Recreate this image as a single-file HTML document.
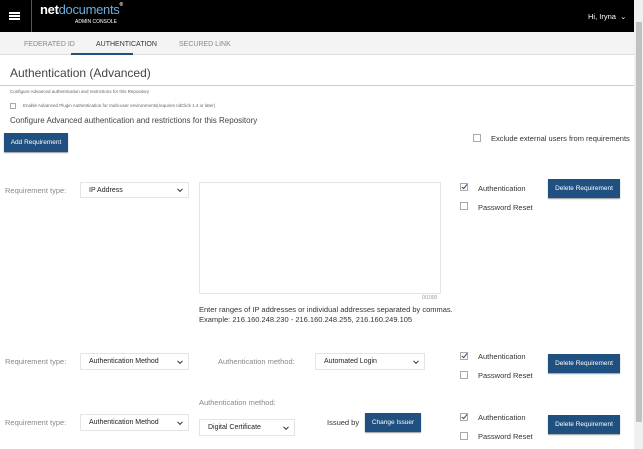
<!DOCTYPE html>
<html><head><style>
*{box-sizing:border-box;margin:0;padding:0}
body{width:643px;height:449px;overflow:hidden;background:#fff;font-family:"Liberation Sans",sans-serif;position:relative;color:#333}
.a{position:absolute;white-space:nowrap}
.sel{position:absolute;border:1px solid #e4e4e4;background:#fff;font-size:7px;color:#222;padding-left:8px;display:flex;align-items:center}
.sel:after{content:"";position:absolute;right:6px;top:50%;width:3px;height:3px;border-right:1.3px solid #333;border-bottom:1.3px solid #333;transform:translateY(-70%) rotate(45deg)}
.btn{position:absolute;background:#1f5080;color:#fff;font-size:6.5px;display:flex;align-items:center;justify-content:center;box-shadow:0 1px 1px #999}
.cb{position:absolute;width:8px;height:8px;border:1px solid #aaa;background:#fff}
.ck:after{content:"";position:absolute;left:2px;top:-1px;width:2px;height:5px;border-right:1.3px solid #2a4a70;border-bottom:1.3px solid #2a4a70;transform:rotate(40deg)}
.lbl{font-size:7.5px;color:#888}
.t8{font-size:7.5px;color:#333}
</style></head><body>
<div class="a" style="left:0;top:0;width:634px;height:32px;background:#000"></div>
<div class="a" style="left:9px;top:12px;width:11px;height:2px;background:#fff;box-shadow:0 3px 0 #fff,0 6px 0 #fff"></div>
<div class="a" style="left:31px;top:0;width:1px;height:32px;background:#555"></div>
<div class="a" style="left:40px;top:2px;font-size:13px;font-weight:bold;color:#fff;letter-spacing:-0.3px">net<span style="color:#6aaee0;font-weight:normal">documents</span><span style="font-size:5px;vertical-align:top">®</span></div>
<div class="a" style="left:75px;top:19px;font-size:5px;color:#fff">ADMIN CONSOLE</div>
<div class="a" style="left:588px;top:12px;font-size:7.5px;color:#fff">Hi, Iryna &nbsp;⌄</div>
<div class="a" style="left:634px;top:0;width:9px;height:449px;background:#f0f0f0"></div>
<div class="a" style="left:636px;top:22px;width:6px;height:400px;background:#c1c1c1"></div>
<div class="a" style="left:0;top:32px;width:634px;height:23px;background:#f4f4f4;border-bottom:1px solid #ddd"></div>
<div class="a" style="left:24px;top:41px;font-size:7px;color:#888">FEDERATED ID</div>
<div class="a" style="left:96px;top:41px;font-size:7px;color:#333">AUTHENTICATION</div>
<div class="a" style="left:179px;top:41px;font-size:7px;color:#888">SECURED LINK</div>
<div class="a" style="left:71px;top:53px;width:62px;height:2px;background:#1f5080"></div>
<div class="a" style="left:10px;top:66px;font-size:12px;color:#444">Authentication (Advanced)</div>
<div class="a" style="left:0;top:85px;width:634px;height:1px;background:#ccc"></div>
<div class="a" style="left:10px;top:89px;font-size:4.5px;color:#666">Configure Advanced authentication and restrictions for this Repository</div>
<div class="cb" style="left:10px;top:103px;width:6px;height:6px"></div>
<div class="a" style="left:23px;top:103px;font-size:4.5px;color:#666">Enable Advanced Plugin Authentication for multi-user environments(requires ndClick 1.4 or later)</div>
<div class="a" style="left:10px;top:116px;font-size:8px;color:#444">Configure Advanced authentication and restrictions for this Repository</div>
<div class="btn" style="left:4px;top:133px;width:64px;height:19px">Add Requirement</div>
<div class="cb" style="left:473px;top:134px"></div>
<div class="a t8" style="left:491px;top:134px">Exclude external users from requirements</div>

<div class="a lbl" style="left:5px;top:186px">Requirement type:</div>
<div class="sel" style="left:80px;top:182px;width:109px;height:16px">IP Address</div>
<div class="a" style="left:199px;top:182px;width:242px;height:112px;border:1px solid #e4e4e4"></div>
<div class="a" style="left:422px;top:295px;font-size:5px;color:#999">0/1000</div>
<div class="a t8" style="left:199px;top:305px;line-height:10px">Enter ranges of IP addresses or individual addresses separated by commas.<br>Example: 216.160.248.230 - 216.160.248.255, 216.160.249.105</div>
<div class="cb ck" style="left:460px;top:183px"></div>
<div class="a t8" style="left:478px;top:184px">Authentication</div>
<div class="cb" style="left:460px;top:202px"></div>
<div class="a t8" style="left:478px;top:203px">Password Reset</div>
<div class="btn" style="left:548px;top:179px;width:72px;height:19px">Delete Requirement</div>

<div class="a lbl" style="left:5px;top:357px">Requirement type:</div>
<div class="sel" style="left:80px;top:353px;width:109px;height:17px">Authentication Method</div>
<div class="a lbl" style="left:218px;top:357px">Authentication method:</div>
<div class="sel" style="left:315px;top:353px;width:110px;height:17px">Automated Login</div>
<div class="cb ck" style="left:460px;top:352px"></div>
<div class="a t8" style="left:478px;top:352px">Authentication</div>
<div class="cb" style="left:460px;top:371px"></div>
<div class="a t8" style="left:478px;top:371px">Password Reset</div>
<div class="btn" style="left:548px;top:354px;width:72px;height:19px">Delete Requirement</div>

<div class="a lbl" style="left:199px;top:398px">Authentication method:</div>
<div class="a lbl" style="left:5px;top:418px">Requirement type:</div>
<div class="sel" style="left:80px;top:414px;width:109px;height:17px">Authentication Method</div>
<div class="sel" style="left:199px;top:419px;width:96px;height:17px">Digital Certificate</div>
<div class="a t8" style="left:327px;top:418px">Issued by</div>
<div class="btn" style="left:365px;top:413px;width:56px;height:19px">Change Issuer</div>
<div class="cb ck" style="left:460px;top:413px"></div>
<div class="a t8" style="left:478px;top:413px">Authentication</div>
<div class="cb" style="left:460px;top:432px"></div>
<div class="a t8" style="left:478px;top:432px">Password Reset</div>
<div class="btn" style="left:548px;top:415px;width:72px;height:19px">Delete Requirement</div>
</body></html>
